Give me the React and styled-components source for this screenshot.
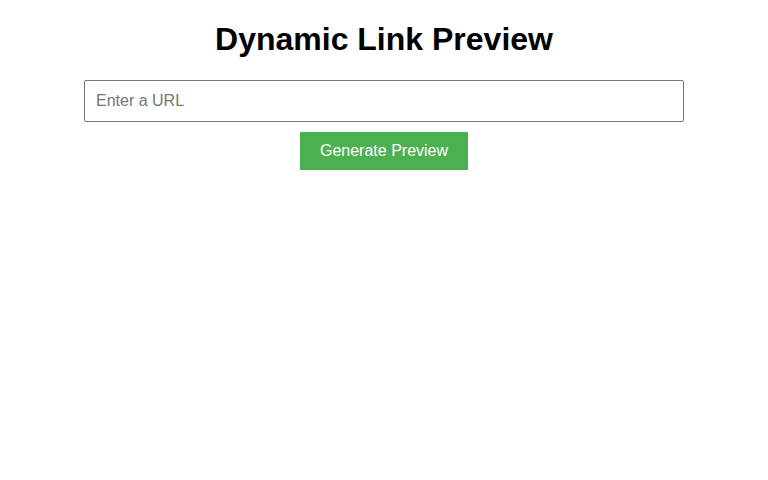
import React, { useState } from "react";
import styled, { createGlobalStyle } from "styled-components";

const GlobalStyle = createGlobalStyle`
  body { margin: 0; background: #fff; font-family: "Liberation Sans", Arial, sans-serif; }
`;

const Page = styled.div`
  display: flex; flex-direction: column; align-items: center;
`;

const Title = styled.h1`
  font-size: 32px; font-weight: 700; color: #000; margin: 21.44px 0;
`;

const UrlInput = styled.input`
  box-sizing: border-box; width: 600px; height: 42px; padding: 0 11px;
  font-size: 16px; font-family: "Liberation Sans", Arial, sans-serif;
  border: 1px solid #767676; border-radius: 2px; outline: none;
  &::placeholder { color: #757575; }
`;

const Button = styled.button`
  margin-top: 10px; padding: 10px 20px; border: none; cursor: pointer;
  background: #4caf50; color: #fff; font-size: 16px; line-height: 18px;
  font-family: "Liberation Sans", Arial, sans-serif;
`;

const App = () => {
  const [url, setUrl] = useState("");
  return (
    <>
      <GlobalStyle />
      <Page>
        <Title>Dynamic Link Preview</Title>
        <UrlInput placeholder="Enter a URL" value={url} onChange={(e) => setUrl(e.target.value)} />
        <Button>Generate Preview</Button>
      </Page>
    </>
  );
};

export default App;
